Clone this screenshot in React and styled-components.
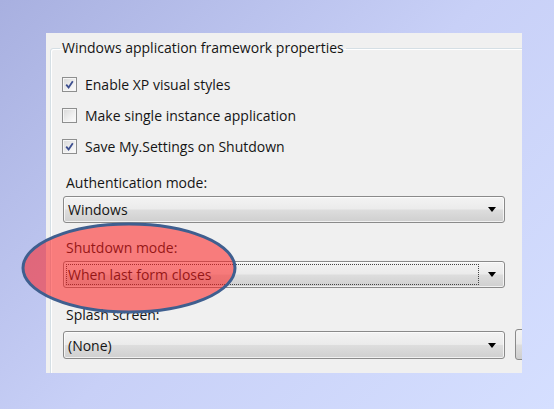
import React from 'react'
import styled, { createGlobalStyle } from 'styled-components'

/* Styles Begin */

const GlobalStyle = createGlobalStyle`
  html, body { margin: 0; padding: 0; }
  body {
    width: 554px;
    height: 409px;
    overflow: hidden;
    background: linear-gradient(135deg, #a8b0e0 0%, #c8d0f7 50%, #d5dfff 100%);
    font-family: "Open Sans", "Noto Sans", sans-serif;
    color: #151515;
  }
`

const Stage = styled.div`
  position: relative;
  width: 554px;
  height: 409px;
  padding: 33px 0 0 46px;
  box-sizing: border-box;
`

const Panel = styled.div`
  width: 476px;
  height: 340px;
  box-sizing: border-box;
  padding: 5px 0 0 4px;
  background: #f0f0f0;
  overflow: hidden;
`

const GroupBox = styled.fieldset`
  margin: 0;
  min-width: 0;
  width: 540px;
  height: 400px;
  box-sizing: border-box;
  padding: 0 0 0 11px;
  border: 1px solid #d5dfe5;
  border-radius: 3px;
  box-shadow: inset 1px 1px 0 #fff;
`

const Legend = styled.legend`
  padding: 0 2px;
  margin-left: -2px;
  font-size: 14px;
  line-height: 20px;
`

const CheckList = styled.div`
  display: flex;
  flex-direction: column;
  gap: 9px;
  margin-top: 15px;
`

const CheckRow = styled.label`
  display: flex;
  align-items: center;
  gap: 8px;
  height: 22px;
  font-size: 14px;
`

const Box = styled.span`
  display: flex;
  align-items: center;
  justify-content: center;
  width: 15px;
  height: 15px;
  box-sizing: border-box;
  border: 1px solid #8e8f8f;
  background: linear-gradient(135deg, #d8d8d8 0%, #f0f0f0 60%, #fdfdfd 100%);
  box-shadow: inset 0 0 0 1px #f6f6f6;
`

const FieldLabel = styled.div`
  margin: ${({ top }) => top}px 0 0 4px;
  font-size: 14px;
  line-height: 20px;
`

const SelectRow = styled.div`
  display: flex;
  gap: 10px;
  margin: ${({ top }) => top}px 0 0 1px;
`

const Select = styled.div`
  display: flex;
  align-items: center;
  width: 442px;
  height: ${({ tall }) => (tall ? 28 : 27)}px;
  box-sizing: border-box;
  padding: 2px;
  border: 1px solid #8a8a8a;
  border-radius: 3px;
  background: linear-gradient(#f3f3f3 0%, #ebebeb 48%, #dddddd 52%, #cfcfcf 100%);
  box-shadow: inset 0 0 0 1px rgba(255, 255, 255, 0.7);
  font-size: 14px;
`

const SelectText = styled.div`
  flex: 1;
  align-self: stretch;
  display: flex;
  align-items: center;
  padding-left: 1px;
  border: 1px dotted ${({ focused }) => (focused ? '#444' : 'transparent')};
`

const Arrow = styled.span`
  width: 0;
  height: 0;
  margin: 0 6px 0 9px;
  border-left: 4px solid transparent;
  border-right: 4px solid transparent;
  border-top: 5px solid #000;
`

const SideButton = styled.div`
  width: 40px;
  height: 31px;
  margin-top: -2px;
  box-sizing: border-box;
  border: 1px solid #8a8a8a;
  border-radius: 3px;
  background: linear-gradient(#f3f3f3 0%, #ebebeb 48%, #dddddd 52%, #cfcfcf 100%);
`

const Highlight = styled.svg`
  position: absolute;
  left: 21px;
  top: 222px;
`

/* Styles End */

const Checkbox = ({ checked, children }) => (
  <CheckRow>
    <Box>
      {checked && (
        <svg width="9" height="9" viewBox="0 0 9 9">
          <path d="M1.2 4.6 L3.6 7.4 L7.8 1.2" fill="none" stroke="#3d4f8f" strokeWidth="1.8" />
        </svg>
      )}
    </Box>
    {children}
  </CheckRow>
)

const Dropdown = ({ value, focused, tall }) => (
  <Select tall={tall}>
    <SelectText focused={focused}>{value}</SelectText>
    <Arrow />
  </Select>
)

const App = () => (
  <Stage>
    <GlobalStyle />
    <Panel>
      <GroupBox>
        <Legend>Windows application framework properties</Legend>
        <CheckList>
          <Checkbox checked>Enable XP visual styles</Checkbox>
          <Checkbox>Make single instance application</Checkbox>
          <Checkbox checked>Save My.Settings on Shutdown</Checkbox>
        </CheckList>
        <FieldLabel top={16}>Authentication mode:</FieldLabel>
        <SelectRow top={3}>
          <Dropdown value="Windows" />
        </SelectRow>
        <FieldLabel top={15}>Shutdown mode:</FieldLabel>
        <SelectRow top={3}>
          <Dropdown value="When last form closes" focused />
        </SelectRow>
        <FieldLabel top={17}>Splash screen:</FieldLabel>
        <SelectRow top={6}>
          <Dropdown value="(None)" tall />
          <SideButton />
        </SelectRow>
      </GroupBox>
    </Panel>
    <Highlight width="216" height="92" viewBox="0 0 216 92">
      <ellipse cx="108" cy="46" rx="106" ry="44" fill="rgba(255, 25, 25, 0.54)" stroke="#3f5f8f" strokeWidth="3" />
    </Highlight>
  </Stage>
)

export default App
